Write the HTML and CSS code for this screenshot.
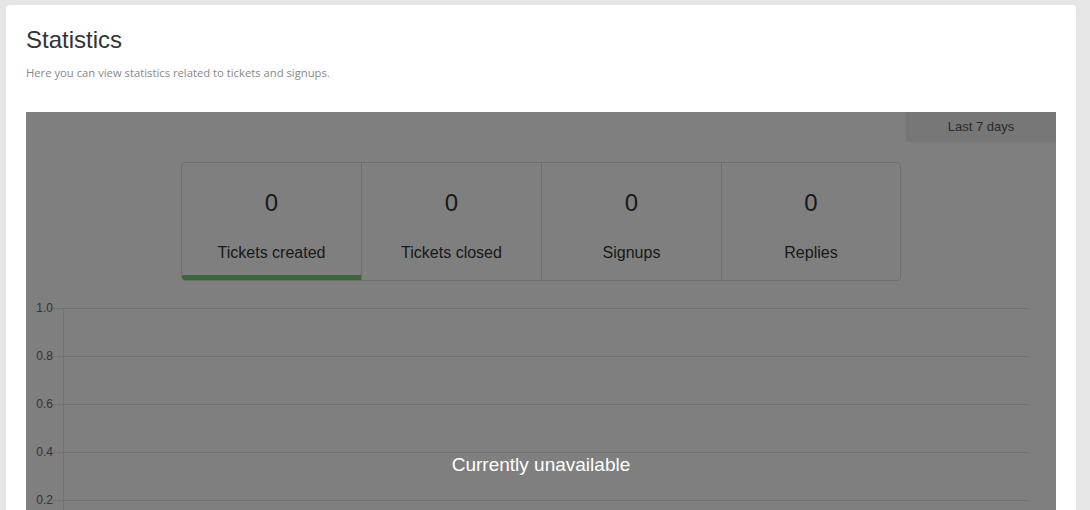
FILE: index.html
```html
<!DOCTYPE html>
<html lang="en">
<head>
<meta charset="utf-8">
<title>Statistics</title>
<link rel="stylesheet" href="styles.css">
</head>
<body>
<div class="card">
  <h1 class="title">Statistics</h1>
  <p class="subtitle">Here you can view statistics related to tickets and signups.</p>

  <div class="panel">
    <div class="toolbar">
      <button class="range-btn">Last 7 days</button>
    </div>

    <div class="stats">
      <div class="stat active">
        <div class="stat-num">0</div>
        <div class="stat-label">Tickets created</div>
      </div>
      <div class="stat">
        <div class="stat-num">0</div>
        <div class="stat-label">Tickets closed</div>
      </div>
      <div class="stat">
        <div class="stat-num">0</div>
        <div class="stat-label">Signups</div>
      </div>
      <div class="stat">
        <div class="stat-num">0</div>
        <div class="stat-label">Replies</div>
      </div>
    </div>

    <div class="chart">
      <div class="y-labels">
        <div class="y-label">1.0</div>
        <div class="y-label">0.8</div>
        <div class="y-label">0.6</div>
        <div class="y-label">0.4</div>
        <div class="y-label">0.2</div>
        <div class="y-label">0.0</div>
      </div>
      <div class="ticks">
        <div class="grid-row"></div>
        <div class="grid-row"></div>
        <div class="grid-row"></div>
        <div class="grid-row"></div>
        <div class="grid-row"></div>
        <div class="grid-row"></div>
      </div>
      <div class="plot">
        <div class="grid-row"></div>
        <div class="grid-row"></div>
        <div class="grid-row"></div>
        <div class="grid-row"></div>
        <div class="grid-row"></div>
        <div class="grid-row"></div>
      </div>
    </div>

    <div class="overlay">
      <span class="overlay-text">Currently unavailable</span>
    </div>
  </div>
</div>
</body>
</html>
```

FILE: styles.css
```css
html, body {
  margin: 0;
  padding: 0;
}

body {
  background: #e6e6e6;
  padding: 5px 14px 0 6px;
  font-family: "Liberation Sans", Arial, sans-serif;
  color: #333;
}

.card {
  background: #fff;
  border-radius: 4px;
  padding: 22px 20px 40px 20px;
}

.title {
  margin: 0;
  font-size: 24px;
  line-height: 26px;
  font-weight: normal;
  color: #333;
}

.subtitle {
  margin: 12px 0 0 0;
  font-family: "Open Sans", "Noto Sans", sans-serif;
  font-size: 11.25px;
  line-height: 15px;
  color: #888;
}

.panel {
  position: relative;
  margin-top: 32px;
  min-height: 706px;
  background: #fff;
}

.toolbar {
  display: flex;
  justify-content: flex-end;
}

.range-btn {
  width: 150px;
  height: 30px;
  border: 0;
  background: #eee;
  color: #555;
  font-family: "Liberation Sans", Arial, sans-serif;
  font-size: 13px;
  padding: 0 0 2px 0;
}

.stats {
  width: 718px;
  margin: 20px auto 0 auto;
  border: 1px solid #ddd;
  border-radius: 4px;
  display: grid;
  grid-template-columns: 179px 180px 180px 179px;
  overflow: hidden;
}

.stat {
  padding: 26px 0 17px 0;
  text-align: center;
  border-left: 1px solid #ddd;
}

.stat:first-child {
  border-left: 0;
}

.stat.active {
  box-shadow: inset 0 -5px 0 #76cc78;
}

.stat-num {
  font-size: 24px;
  line-height: 28px;
  color: #333;
}

.stat-label {
  margin-top: 26px;
  font-size: 16px;
  line-height: 20px;
  color: #333;
}

.chart {
  display: flex;
  margin-top: 3px;
  margin-right: 28px;
}

.y-labels {
  width: 27px;
  display: flex;
  flex-direction: column;
}

.y-label {
  height: 48px;
  line-height: 48px;
  font-size: 12px;
  color: #666;
  text-align: right;
}

.ticks {
  width: 10px;
  margin-top: 24px;
}

.plot {
  flex: 1;
  margin-top: 24px;
  border-left: 1px solid #e2e2e2;
}

.grid-row {
  height: 47px;
  border-top: 1px solid #e2e2e2;
}

.overlay {
  position: absolute;
  inset: 0;
  background: rgba(0, 0, 0, 0.5);
  display: flex;
  align-items: center;
  justify-content: center;
}

.overlay-text {
  color: #fff;
  font-size: 19px;
  line-height: 22px;
}
```
